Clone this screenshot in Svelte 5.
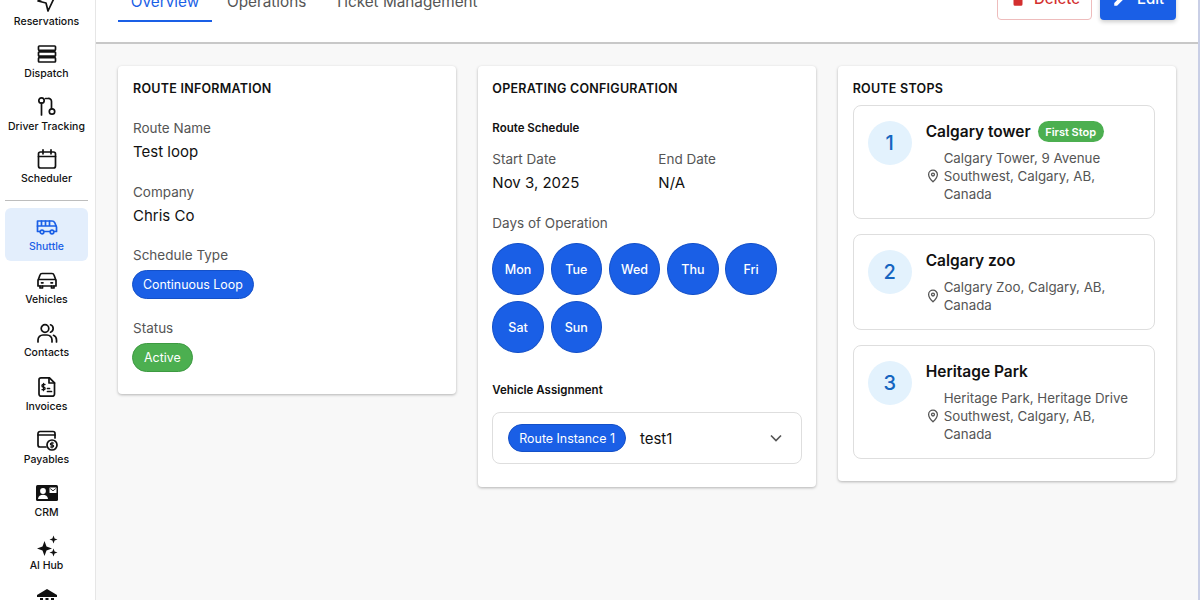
<script lang="ts">
  const days = ["Mon", "Tue", "Wed", "Thu", "Fri", "Sat", "Sun"];
  const navTop = ["Reservations", "Dispatch", "Driver Tracking", "Scheduler"];
  const navBottom = ["Shuttle", "Vehicles", "Contacts", "Invoices", "Payables", "CRM", "AI Hub"];
  const stops = [
    { n: 1, name: "Calgary tower", first: true, address: "Calgary Tower, 9 Avenue Southwest, Calgary, AB, Canada" },
    { n: 2, name: "Calgary zoo", first: false, address: "Calgary Zoo, Calgary, AB, Canada" },
    { n: 3, name: "Heritage Park", first: false, address: "Heritage Park, Heritage Drive Southwest, Calgary, AB, Canada" }
  ];
</script>

{#snippet icon(name: string)}
  <svg class="nav-icon" viewBox="0 0 24 24" fill="none" stroke="currentColor" stroke-width="1.7" stroke-linecap="round" stroke-linejoin="round">
    {#if name === "Reservations"}
      <polygon points="3 11 22 2 13 21 11 13 3 11" />
    {:else if name === "Dispatch"}
      <rect x="3.5" y="4" width="17" height="4.4" rx="0.8" />
      <rect x="3.5" y="9.8" width="17" height="4.4" rx="0.8" />
      <rect x="3.5" y="15.6" width="17" height="4.4" rx="0.8" />
    {:else if name === "Driver Tracking"}
      <circle cx="6.5" cy="5.5" r="2.7" />
      <path d="M6.5 8.2V20" />
      <path d="M10.5 3.5h2.5a3 3 0 0 1 3.5 3v7" />
      <circle cx="17" cy="16.5" r="2.7" />
    {:else if name === "Scheduler"}
      <rect x="3.5" y="5" width="17" height="16" rx="2" />
      <path d="M3.5 9.5h17M8 2.8v4M16 2.8v4" />
    {:else if name === "Shuttle"}
      <path d="M2.5 6h14.5c1.3 0 2.2.6 2.8 1.800l1.700 4.200v4.500h-19z" />
      <path d="M2.5 11h18.500M6.500 6v5M10.500 6v5M14.500 6v5" />
      <circle cx="7" cy="17" r="1.800" fill="#e3eefc" />
      <circle cx="17" cy="17" r="1.800" fill="#e3eefc" />
    {:else if name === "Vehicles"}
      <path d="M3 12.500l2-5.500c.3-1 1.100-1.500 2-1.500h10c.9 0 1.700.5 2 1.500l2 5.500v5.500H3z" />
      <path d="M3.500 11.500h17M5 18v2h2.500v-2M16.500 18v2H19v-2" />
      <path d="M6.500 14.800h1.500M16 14.800h1.500" />
    {:else if name === "Contacts"}
      <circle cx="10" cy="7.500" r="3.800" />
      <path d="M3 21v-2a5 5 0 0 1 5-5h4a5 5 0 0 1 5 5v2" />
      <path d="M15.500 3.800a3.900 3.900 0 0 1 0 7.400M18.500 14.300a5 5 0 0 1 3 4.700v2" />
    {:else if name === "Invoices"}
      <path d="M6 2.800h8.500l5 5V19a2.200 2.200 0 0 1-2.200 2.200H6.200A2.200 2.200 0 0 1 4 19V4.800a2 2 0 0 1 2-2z" />
      <path d="M14 3v5h5.500M12.500 16.500h4M12.500 13.500h2" />
      <path d="M10 9.500H8.200a1.200 1.200 0 0 0 0 2.600h.6a1.200 1.200 0 0 1 0 2.600H7M8.500 8.500v7.200" stroke-width="1.300" />
    {:else if name === "Payables"}
      <path d="M11 19H5a2 2 0 0 1-2-2V5.500a2 2 0 0 1 2-2h13a2 2 0 0 1 2 2V10" />
      <path d="M3 7h17" />
      <circle cx="17" cy="17" r="5" />
      <path d="M18.600 15h-2.200a1 1 0 0 0 0 2h1.200a1 1 0 0 1 0 2h-2.200M17 14v6" stroke-width="1.200" />
    {:else if name === "CRM"}
      <rect x="1" y="4" width="22" height="16" rx="1.500" fill="currentColor" stroke="none" />
      <circle cx="8" cy="10" r="2.900" fill="#fff" stroke="none" />
      <path d="M3 18c.3-3 2.400-4.200 5-4.200s4.700 1.200 5 4.200z" fill="#fff" stroke="none" />
      <rect x="14.500" y="6.500" width="7" height="5.500" rx="0.5" fill="#fff" stroke="none" />
      <path d="M15.500 7.800l2.500 2 2.500-2" stroke="#111" stroke-width="0.9" />
    {:else if name === "AI Hub"}
      <g fill="currentColor" stroke="none">
        <path d="M9.500 7l2 5.500 5.500 2-5.500 2-2 5.500-2-5.500-5.500-2 5.500-2z" />
        <path d="M18.500 1.500l1.100 2.900 2.900 1.100-2.900 1.100-1.100 2.900-1.100-2.900-2.900-1.100 2.900-1.100z" />
        <path d="M18.500 14.500l1.100 2.900 2.900 1.100-2.900 1.100-1.100 2.900-1.100-2.900-2.900-1.100 2.900-1.100z" />
      </g>
    {/if}
  </svg>
{/snippet}

{#snippet navItem(name: string)}
  <div class="nav-item" class:active={name === "Shuttle"} class:tight={navTop.includes(name)}>
    {@render icon(name)}
    <span>{name}</span>
  </div>
{/snippet}

{#snippet pin()}
  <svg class="pin" viewBox="0 0 24 24" fill="none" stroke="currentColor" stroke-width="2.2" stroke-linejoin="round">
    <path d="M12 22s7.500-7 7.500-12.500a7.500 7.500 0 0 0-15 0C4.500 15 12 22 12 22z" />
    <circle cx="12" cy="9.500" r="2.500" />
  </svg>
{/snippet}

<div class="shell">
  <aside class="sidebar">
    <div class="nav-scroll">
      {#each navTop as name}
        {@render navItem(name)}
      {/each}
      <hr />
      {#each navBottom as name}
        {@render navItem(name)}
      {/each}
      <div class="nav-item">
        <svg class="nav-icon" viewBox="0 0 24 24" fill="currentColor">
          <path d="M12 2L2 8v2h20V8z" />
          <rect x="5" y="11" width="3" height="8" />
          <rect x="10.500" y="11" width="3" height="8" />
          <rect x="16" y="11" width="3" height="8" />
        </svg>
      </div>
    </div>
  </aside>

  <div class="content">
    <header class="topbar">
      <nav class="tabs">
        <div class="tab current">Overview</div>
        <div class="tab">Operations</div>
        <div class="tab">Ticket Management</div>
      </nav>
      <div class="actions">
        <button class="btn delete">
          <svg viewBox="0 0 24 24" fill="#d32f2f"><path d="M6 19a2 2 0 0 0 2 2h8a2 2 0 0 0 2-2V7H6zM19 4h-3.500l-1-1h-5l-1 1H5v2h14z" /></svg>
          Delete
        </button>
        <button class="btn edit">
          <svg viewBox="0 0 24 24" fill="#fff"><path d="M3 17.250V21h3.750L17.810 9.940l-3.750-3.750zM20.710 7.040a1 1 0 0 0 0-1.410l-2.340-2.340a1 1 0 0 0-1.410 0l-1.830 1.830 3.750 3.750z" /></svg>
          Edit
        </button>
      </div>
    </header>

    <main class="grid">
      <section class="card info">
        <h2>ROUTE INFORMATION</h2>
        <div class="field">
          <div class="label">Route Name</div>
          <div class="value">Test loop</div>
        </div>
        <div class="field">
          <div class="label">Company</div>
          <div class="value">Chris Co</div>
        </div>
        <div class="field">
          <div class="label">Schedule Type</div>
          <span class="pill blue">Continuous Loop</span>
        </div>
        <div class="field">
          <div class="label">Status</div>
          <span class="pill green">Active</span>
        </div>
      </section>

      <section class="card config">
        <h2>OPERATING CONFIGURATION</h2>
        <h3>Route Schedule</h3>
        <div class="dates">
          <div>
            <div class="label">Start Date</div>
            <div class="value">Nov 3, 2025</div>
          </div>
          <div>
            <div class="label">End Date</div>
            <div class="value">N/A</div>
          </div>
        </div>
        <div class="label days-label">Days of Operation</div>
        <div class="days">
          {#each days as day}
            <div class="day">{day}</div>
          {/each}
        </div>
        <h3 class="assign">Vehicle Assignment</h3>
        <div class="instance">
          <span class="pill blue">Route Instance 1</span>
          <span class="instance-name">test1</span>
          <svg class="chevron" viewBox="0 0 24 24" fill="none" stroke="currentColor" stroke-width="2"><path d="M6 9l6 6 6-6" /></svg>
        </div>
      </section>

      <section class="card stops">
        <h2>ROUTE STOPS</h2>
        {#each stops as stop}
          <article class="stop">
            <div class="num">{stop.n}</div>
            <div class="stop-body">
              <div class="stop-title">
                <span class="stop-name">{stop.name}</span>
                {#if stop.first}<span class="badge">First Stop</span>{/if}
              </div>
              <div class="address">
                {@render pin()}
                <span>{stop.address}</span>
              </div>
            </div>
          </article>
        {/each}
      </section>
    </main>
  </div>
</div>

<style>
  :global(body) {
    margin: 0;
    background: #f8f8f8;
  }

  .shell {
    display: flex;
    height: 600px;
    overflow: hidden;
    font-family: Inter, "Open Sans", sans-serif;
    color: #111;
    border-right: 2px solid #c9cfe6;
    box-sizing: border-box;
  }

  .sidebar {
    flex: 0 0 96px;
    background: #fff;
    border-right: 1px solid #e6e6e6;
    box-sizing: border-box;
    overflow: hidden;
  }

  .nav-scroll {
    margin-top: -17px;
    padding: 0 7px 0 5px;
  }

  .nav-item {
    height: 53.200px;
    display: flex;
    flex-direction: column;
    align-items: center;
    padding-top: 7px;
    box-sizing: border-box;
    border-radius: 6px;
    color: #111;
  }

  .nav-item.tight {
    height: 52.400px;
  }

  .nav-item span {
    font-size: 10.500px;
    font-weight: 500;
    line-height: 14px;
    margin-top: 1px;
    white-space: nowrap;
  }

  .nav-item.active {
    background: #e3eefc;
    color: #1a5fe6;
  }

  .nav-icon {
    width: 24px;
    height: 24px;
    flex: none;
  }

  hr {
    border: 0;
    border-top: 1px solid #bdbdbd;
    margin: 7px 0 7.400px;
  }

  .content {
    flex: 1;
    min-width: 0;
    display: flex;
    flex-direction: column;
  }

  .topbar {
    height: 44px;
    flex: none;
    background: #fff;
    border-bottom: 2px solid #c8c8c8;
    box-sizing: border-box;
    display: flex;
    justify-content: space-between;
    padding: 0 22px;
    overflow: hidden;
  }

  .tabs {
    display: flex;
    height: 22px;
    align-items: flex-end;
  }

  .tab {
    height: 40px;
    flex: none;
    line-height: 18px;
    padding: 0 14px 11px;
    margin-top: -18px;
    box-sizing: border-box;
    font-size: 15.300px;
    color: #555;
    display: flex;
    align-items: flex-end;
  }

  .tab.current {
    color: #1a5fe6;
    border-bottom: 2px solid #1a5fe6;
    padding: 0 0 9px;
    width: 94px;
    justify-content: center;
    margin-right: 1px;
  }

  .actions {
    display: flex;
    gap: 8px;
    height: 19.500px;
    align-items: flex-end;
  }

  .btn {
    height: 42px;
    flex: none;
    display: flex;
    align-items: center;
    justify-content: center;
    gap: 7px;
    border-radius: 4px;
    font: 500 15px Inter, sans-serif;
    box-sizing: border-box;
    padding: 0;
  }

  .btn svg {
    width: 18px;
    height: 18px;
  }

  .delete {
    width: 95px;
    background: #fff;
    color: #d32f2f;
    border: 1px solid #eebcbc;
  }

  .edit {
    width: 76px;
    background: #1a5fe6;
    color: #fff;
    border: 0;
    box-shadow: 0 2px 4px rgba(0, 0, 0, 0.2);
  }

  .grid {
    display: grid;
    grid-template-columns: repeat(3, 1fr);
    gap: 21.500px;
    padding: 22px 22px 0;
    align-items: start;
  }

  .card {
    background: #fff;
    border-radius: 4px;
    box-shadow: 0 1px 3px rgba(0, 0, 0, 0.28);
    padding: 14px 15px;
    box-sizing: border-box;
    min-width: 0;
  }

  h2 {
    margin: 0;
    font-size: 12.500px;
    line-height: 17px;
    font-weight: 600;
    letter-spacing: 0.250px;
  }

  h3 {
    margin: 0;
    font-size: 11.500px;
    line-height: 14px;
    font-weight: 600;
  }

  .label {
    font-size: 13.500px;
    line-height: 18px;
    color: #555;
  }

  .value {
    font-size: 15px;
    line-height: 24px;
    margin-top: 3px;
  }

  .field {
    margin-top: 18.500px;
  }

  .field .pill {
    margin-left: -1px;
  }

  .info {
    height: 328px;
  }

  .info h2 {
    margin-bottom: 22px;
  }

  .info .field:first-of-type {
    margin-top: 0;
  }

  .pill {
    display: inline-flex;
    align-items: center;
    height: 29px;
    padding: 0 10px;
    border-radius: 15px;
    font-size: 12.400px;
    color: #fff;
    box-sizing: border-box;
    margin: 6px 0 1.500px;
  }

  .blue {
    background: #1a5fe6;
    border: 1px solid #1450c8;
  }

  .green {
    background: #4caf50;
    border: 1px solid #3d9a41;
    padding: 0 11px;
  }

  .config {
    height: 421px;
    padding-inline: 14.500px;
  }

  .config h3 {
    margin-top: 24px;
  }

  .dates {
    display: grid;
    grid-template-columns: 166px 1fr;
    margin-top: 15px;
  }

  .days-label {
    margin-top: 19px;
  }

  .days {
    display: flex;
    flex-wrap: wrap;
    gap: 6px 6.750px;
    margin-top: 11px;
  }

  .day {
    width: 51.500px;
    height: 52px;
    border-radius: 50%;
    background: #1a5fe6;
    border: 1px solid #1450c8;
    color: #fff;
    box-sizing: border-box;
    display: flex;
    align-items: center;
    justify-content: center;
    font-size: 12.500px;
    font-weight: 500;
  }

  .config h3.assign {
    margin-top: 30px;
  }

  .instance {
    height: 52px;
    margin-top: 15px;
    border: 1px solid #dedede;
    border-radius: 8px;
    box-sizing: border-box;
    display: flex;
    align-items: center;
    padding: 0 15px;
  }

  .instance .pill {
    height: 28px;
    margin: 0;
    flex: none;
  }

  .instance-name {
    margin-left: 14px;
    font-size: 15px;
    flex: 1;
  }

  .chevron {
    width: 20px;
    height: 20px;
    color: #555;
  }

  .stops {
    height: 415px;
    padding-right: 21px;
  }

  .stops h2 {
    margin-bottom: 8px;
  }

  .stop {
    border: 1px solid #dedede;
    border-radius: 8px;
    padding: 15px 14px;
    margin-bottom: 15px;
    display: flex;
    gap: 14px;
  }

  .num {
    width: 44px;
    height: 44px;
    flex: none;
    border-radius: 50%;
    background: #e3f2fd;
    color: #1565c0;
    font-size: 20px;
    font-weight: 500;
    display: flex;
    align-items: center;
    justify-content: center;
  }

  .stop-body {
    min-width: 0;
    flex: 1;
  }

  .stop-title {
    display: flex;
    align-items: center;
    gap: 7px;
    height: 21px;
  }

  .stop-name {
    font-size: 15.500px;
    font-weight: 600;
  }

  .badge {
    height: 21px;
    padding: 0 7.500px;
    border-radius: 11px;
    background: #4caf50;
    color: #fff;
    font-size: 11px;
    font-weight: 600;
    display: inline-flex;
    align-items: center;
  }

  .address {
    display: flex;
    align-items: center;
    gap: 4px;
    margin-top: 7px;
    font-size: 13.300px;
    line-height: 18px;
    color: #555;
  }

  .address span {
    max-width: 190px;
  }

  .pin {
    width: 14px;
    height: 14px;
    flex: none;
  }
</style>
